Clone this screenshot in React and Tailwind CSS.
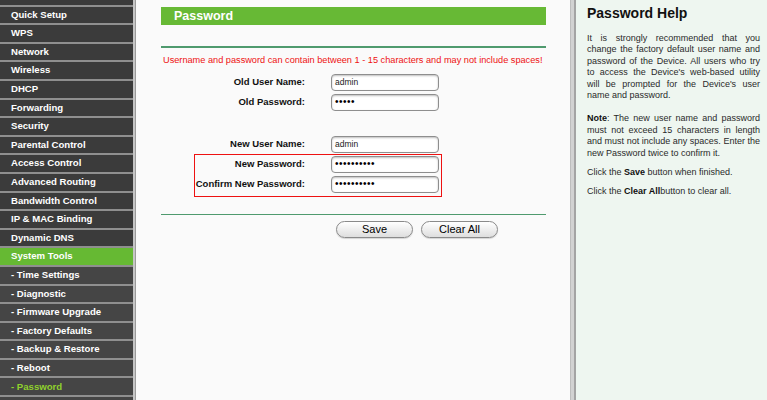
import React from 'react';

const menu = [
  { label: 'Status' },
  { label: 'Quick Setup' },
  { label: 'WPS' },
  { label: 'Network' },
  { label: 'Wireless' },
  { label: 'DHCP' },
  { label: 'Forwarding' },
  { label: 'Security' },
  { label: 'Parental Control' },
  { label: 'Access Control' },
  { label: 'Advanced Routing' },
  { label: 'Bandwidth Control' },
  { label: 'IP & MAC Binding' },
  { label: 'Dynamic DNS' },
  { label: 'System Tools', open: true },
  { label: '- Time Settings', sub: true },
  { label: '- Diagnostic', sub: true },
  { label: '- Firmware Upgrade', sub: true },
  { label: '- Factory Defaults', sub: true },
  { label: '- Backup & Restore', sub: true },
  { label: '- Reboot', sub: true },
  { label: '- Password', sub: true, active: true },
  { label: '- System Log', sub: true },
];

const Sidebar = () => {
  return (
    <div className="w-[133px] shrink-0 bg-[#3a3a3a] overflow-hidden">
      <div className="-mt-[12px]">
        {menu.map((item) => (
          <div
            key={item.label}
            className={
              'h-[18.6px] flex items-center pl-[11px] border-b-2 border-[#8f8f8f] text-[9.6px] font-bold whitespace-nowrap ' +
              (item.open
                ? 'bg-[#66b933] text-white'
                : item.active
                ? 'bg-[#454545] text-[#8fd12c]'
                : item.sub
                ? 'bg-[#454545] text-white'
                : 'bg-[#3b3b3b] text-white')
            }
          >
            {item.label}
          </div>
        ))}
      </div>
    </div>
  );
};

const Field = ({ value, password }) => (
  <div className="w-[108px] h-[17px] rounded-[4px] border border-[#8e8e8e] bg-white shadow-[inset_0_1px_2px_rgba(0,0,0,0.25)] flex items-center pl-[3px]">
    {password ? (
      <span className="text-[10px] leading-none tracking-[0.5px] text-black">{value}</span>
    ) : (
      <span className="text-[8.5px] leading-none text-[#222]">{value}</span>
    )}
  </div>
);

const Row = ({ label, labelWidth = 'w-[144px]', children }) => (
  <div className="flex items-center h-[17px]">
    <div className={labelWidth + ' text-right text-[9.5px] font-bold text-[#111] shrink-0'}>{label}</div>
    <div className="ml-[26px]">{children}</div>
  </div>
);

const Button = ({ children }) => (
  <button className="w-[77px] h-[17px] rounded-full border border-[#8a8a8a] bg-gradient-to-b from-white to-[#dedede] text-[11px] leading-none text-black shadow-[0_1px_1px_rgba(0,0,0,0.15)]">
    {children}
  </button>
);

const Main = () => {
  return (
    <div className="w-[434px] shrink-0 bg-[#fafafa] pl-[25px] pt-[7px]">
      <div className="w-[385px]">
        <div className="h-[18px] bg-[#67b935] flex items-center pl-[13px] text-[12.5px] font-bold text-white">
          Password
        </div>
        <div className="mt-[21px] h-[1.5px] bg-[#4f9a6e]" />
        <div className="mt-[6px] text-[9.2px] leading-[12px] text-[#ee1111] whitespace-nowrap pl-[2px]">
          Username and password can contain between 1 - 15 characters and may not include spaces!
        </div>
        <div className="mt-[8px] flex flex-col gap-[3px]">
          <Row label="Old User Name:">
            <Field value="admin" />
          </Row>
          <Row label="Old Password:">
            <Field value="•••••" password />
          </Row>
        </div>
        <div className="mt-[25px]">
          <Row label="New User Name:">
            <Field value="admin" />
          </Row>
        </div>
        <div className="mt-[1px] ml-[33px] w-[248px] border border-[#ee1111] pt-[1px] pb-[3px] flex flex-col gap-[3px]">
          <Row label="New Password:" labelWidth="w-[110px]">
            <Field value="••••••••••" password />
          </Row>
          <Row label="Confirm New Password:" labelWidth="w-[110px]">
            <Field value="••••••••••" password />
          </Row>
        </div>
        <div className="mt-[17px] h-[1.5px] bg-[#4f9a6e]" />
        <div className="mt-[6px] ml-[175px] flex gap-[8px]">
          <Button>Save</Button>
          <Button>Clear All</Button>
        </div>
      </div>
    </div>
  );
};

const Help = () => {
  return (
    <div className="flex-1 bg-[#eef6f0] pl-[11px] pr-[7px] pt-[5px] text-[#2a2a2a]">
      <div className="text-[14px] font-bold text-[#111] leading-[16px]">Password Help</div>
      <p className="mt-[12px] text-[9px] leading-[11.4px] text-justify">
        It is strongly recommended that you change the factory default user name and password of the Device. All
        users who try to access the Device's web-based utility will be prompted for the Device's user name and
        password.
      </p>
      <p className="mt-[12px] text-[9px] leading-[11.4px] text-justify">
        <b className="text-[#111]">Note</b>: The new user name and password must not exceed 15 characters in length
        and must not include any spaces. Enter the new Password twice to confirm it.
      </p>
      <p className="mt-[8px] text-[9px] leading-[11.4px]">
        Click the <b className="text-[#111]">Save</b> button when finished.
      </p>
      <p className="mt-[8px] text-[9px] leading-[11.4px]">
        Click the <b className="text-[#111]">Clear All</b>button to clear all.
      </p>
    </div>
  );
};

const App = () => {
  return (
    <div className="w-[767px] h-[400px] flex overflow-hidden font-['Liberation_Sans',Arial,sans-serif]">
      <Sidebar />
      <div className="w-[3px] shrink-0 bg-[#c6c6c6] border-r border-[#9a9a9a]" />
      <Main />
      <div className="w-[6px] shrink-0 bg-[#d2d2d2] border-l border-r-2 border-l-[#bdbdbd] border-r-[#a4a4a4]" />
      <Help />
    </div>
  );
};

export default App;
